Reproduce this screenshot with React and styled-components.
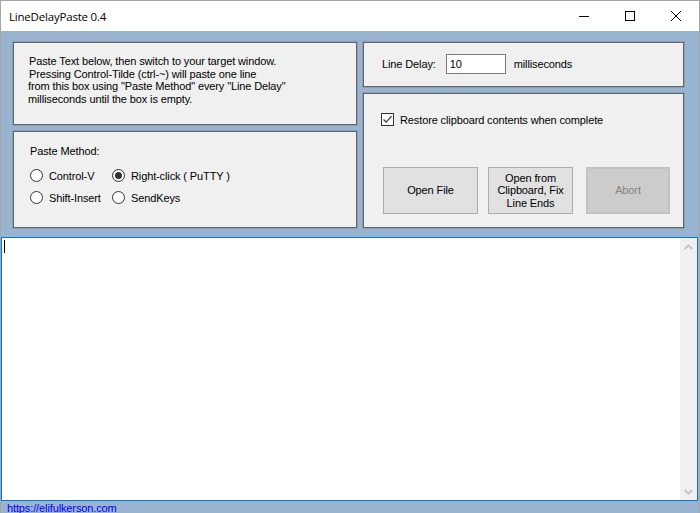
import React from "react";
import styled, { createGlobalStyle } from "styled-components";

const Global = createGlobalStyle`
  html, body { margin: 0; padding: 0; background: #ffffff; }
  * { box-sizing: border-box; }
`;

const Window = styled.div`
  width: 700px;
  height: 513px;
  border: 1px solid #a6a6a6;
  border-bottom: none;
  display: flex;
  flex-direction: column;
  overflow: hidden;
  font-family: "Liberation Sans", Arial, sans-serif;
  font-size: 11px;
  letter-spacing: -0.12px;
  color: #000;
`;

const TitleBar = styled.div`
  height: 30px;
  flex: none;
  background: #ffffff;
  display: flex;
  align-items: center;
`;

const Title = styled.div`
  padding-left: 8px;
  font-family: "Open Sans", "Noto Sans", sans-serif;
  font-size: 11.5px;
  letter-spacing: -0.2px;
  color: #000;
`;

const Captions = styled.div`
  margin-left: auto;
  display: flex;
  height: 100%;
`;

const CaptionButton = styled.div`
  width: 46px;
  height: 30px;
  display: flex;
  align-items: center;
  justify-content: center;
`;

const Client = styled.div`
  flex: 1;
  background: #99b4d1;
  display: flex;
  flex-direction: column;
  min-height: 0;
`;

const TopArea = styled.div`
  padding: 11px 0 0 12px;
  display: grid;
  grid-template-columns: 344px 321px;
  column-gap: 6px;
  flex: none;
`;

const Column = styled.div`
  display: flex;
  flex-direction: column;
  gap: 6px;
`;

const Panel = styled.div`
  height: ${(p) => p.$h}px;
  background: #f0f0f0;
  border: 1px solid #646464;
  box-shadow: 0 0 0 1px rgba(110, 120, 135, 0.35);
`;

const InfoPanel = styled(Panel)`
  padding: 12px 0 0 14px;
`;

const InfoLine = styled.div`
  line-height: 12.7px;
  padding-left: ${(p) => (p.$indent ? 1 : 0)}px;
  white-space: nowrap;
`;

const MethodPanel = styled(Panel)`
  padding: 13px 0 0 16px;
`;

const MethodLabel = styled.div`
  line-height: 13px;
  margin-bottom: 11px;
`;

const RadioGrid = styled.div`
  display: grid;
  grid-template-columns: 82px auto;
  row-gap: 9px;
`;

const RadioOption = styled.div`
  display: flex;
  align-items: center;
  gap: 6px;
  height: 13px;
  white-space: nowrap;
`;

const RadioCircle = styled.span`
  width: 13px;
  height: 13px;
  border-radius: 50%;
  border: 1px solid #333333;
  background: #ffffff;
  display: flex;
  align-items: center;
  justify-content: center;
  flex: none;
  &::after {
    content: "";
    width: 7px;
    height: 7px;
    border-radius: 50%;
    background: ${(p) => (p.$checked ? "#333333" : "transparent")};
  }
`;

const DelayPanel = styled(Panel)`
  display: flex;
  align-items: center;
  padding-left: 18px;
  padding-bottom: 1px;
`;

const DelayInput = styled.div`
  width: 60px;
  height: 20px;
  margin-left: 10px;
  margin-right: 8px;
  border: 1px solid #7a7a7a;
  background: #ffffff;
  padding-left: 3px;
  display: flex;
  align-items: center;
`;

const ActionPanel = styled(Panel)`
  padding: 19px 0 0 17px;
  display: flex;
  flex-direction: column;
`;

const CheckRow = styled.div`
  display: flex;
  align-items: center;
  gap: 6px;
  height: 13px;
`;

const CheckBox = styled.span`
  width: 13px;
  height: 13px;
  border: 1px solid #333333;
  background: #ffffff;
  display: flex;
  align-items: center;
  justify-content: center;
  flex: none;
`;

const ButtonRow = styled.div`
  margin-top: 41px;
  margin-left: 2px;
  display: flex;
`;

const Button = styled.div`
  width: ${(p) => p.$w}px;
  height: 47px;
  margin-left: ${(p) => p.$ml || 0}px;
  background: ${(p) => (p.$disabled ? "#cccccc" : "#e1e1e1")};
  border: 1px solid ${(p) => (p.$disabled ? "#bfbfbf" : "#adadad")};
  box-shadow: ${(p) => (p.$disabled ? "inset 0 0 0 1px #c4c4c4" : "none")};
  color: ${(p) => (p.$disabled ? "#838383" : "#000000")};
  display: flex;
  align-items: center;
  justify-content: center;
  text-align: center;
  line-height: 12.5px;
`;

const Editor = styled.div`
  margin-top: 9px;
  height: 264px;
  width: 697px;
  border: 1px solid #0078d7;
  background: #ffffff;
  display: flex;
  flex: none;
`;

const EditArea = styled.div`
  flex: 1;
  padding: 2px 0 0 2px;
`;

const Caret = styled.span`
  display: block;
  width: 1px;
  height: 13px;
  background: #000000;
`;

const ScrollBar = styled.div`
  width: 17px;
  background: #f0f0f0;
  display: flex;
  flex-direction: column;
  justify-content: space-between;
`;

const ScrollArrow = styled.div`
  height: 17px;
  display: flex;
  align-items: center;
  justify-content: center;
`;

const StatusBar = styled.div`
  flex: 1;
  padding-left: 6px;
  overflow: hidden;
  line-height: 13px;
  padding-top: 1px;
`;

const Link = styled.span`
  color: #0000ff;
  font-size: 11px;
`;

export default function App() {
  return (
    <>
      <Global />
      <Window>
        <TitleBar>
          <Title>LineDelayPaste 0.4</Title>
          <Captions>
            <CaptionButton>
              <svg width="10" height="10" viewBox="0 0 10 10">
                <line x1="0" y1="5.5" x2="10" y2="5.5" stroke="#000" strokeWidth="1" />
              </svg>
            </CaptionButton>
            <CaptionButton>
              <svg width="10" height="10" viewBox="0 0 10 10">
                <rect x="0.5" y="0.5" width="9" height="9" fill="none" stroke="#000" strokeWidth="1" />
              </svg>
            </CaptionButton>
            <CaptionButton>
              <svg width="10" height="10" viewBox="0 0 10 10">
                <path d="M0 0 L10 10 M10 0 L0 10" stroke="#000" strokeWidth="1" />
              </svg>
            </CaptionButton>
          </Captions>
        </TitleBar>
        <Client>
          <TopArea>
            <Column>
              <InfoPanel $h={83}>
                <InfoLine $indent>Paste Text below, then switch to your target window.</InfoLine>
                <InfoLine $indent>Pressing Control-Tilde (ctrl-~) will paste one line</InfoLine>
                <InfoLine>from this box using "Paste Method" every "Line Delay"</InfoLine>
                <InfoLine>milliseconds until the box is empty.</InfoLine>
              </InfoPanel>
              <MethodPanel $h={97}>
                <MethodLabel>Paste Method:</MethodLabel>
                <RadioGrid>
                  <RadioOption>
                    <RadioCircle />
                    Control-V
                  </RadioOption>
                  <RadioOption>
                    <RadioCircle $checked />
                    Right-click ( PuTTY )
                  </RadioOption>
                  <RadioOption>
                    <RadioCircle />
                    Shift-Insert
                  </RadioOption>
                  <RadioOption>
                    <RadioCircle />
                    SendKeys
                  </RadioOption>
                </RadioGrid>
              </MethodPanel>
            </Column>
            <Column>
              <DelayPanel $h={45}>
                Line Delay:
                <DelayInput>10</DelayInput>
                milliseconds
              </DelayPanel>
              <ActionPanel $h={135}>
                <CheckRow>
                  <CheckBox>
                    <svg width="11" height="11" viewBox="0 0 11 11">
                      <path d="M1.5 5.5 L4.2 8.2 L9.5 2.2" fill="none" stroke="#333" strokeWidth="1.2" />
                    </svg>
                  </CheckBox>
                  Restore clipboard contents when complete
                </CheckRow>
                <ButtonRow>
                  <Button $w={95}>Open File</Button>
                  <Button $w={85} $ml={10}>
                    Open from
                    <br />
                    Clipboard, Fix
                    <br />
                    Line Ends
                  </Button>
                  <Button $w={84} $ml={13} $disabled>
                    Abort
                  </Button>
                </ButtonRow>
              </ActionPanel>
            </Column>
          </TopArea>
          <Editor>
            <EditArea>
              <Caret />
            </EditArea>
            <ScrollBar>
              <ScrollArrow>
                <svg width="9" height="6" viewBox="0 0 9 6">
                  <path d="M0.8 5 L4.5 1.3 L8.2 5" fill="none" stroke="#c2c2c2" strokeWidth="1.8" />
                </svg>
              </ScrollArrow>
              <ScrollArrow>
                <svg width="9" height="6" viewBox="0 0 9 6">
                  <path d="M0.8 1 L4.5 4.7 L8.2 1" fill="none" stroke="#c2c2c2" strokeWidth="1.8" />
                </svg>
              </ScrollArrow>
            </ScrollBar>
          </Editor>
          <StatusBar>
            <Link>https://elifulkerson.com</Link>
          </StatusBar>
        </Client>
      </Window>
    </>
  );
}
